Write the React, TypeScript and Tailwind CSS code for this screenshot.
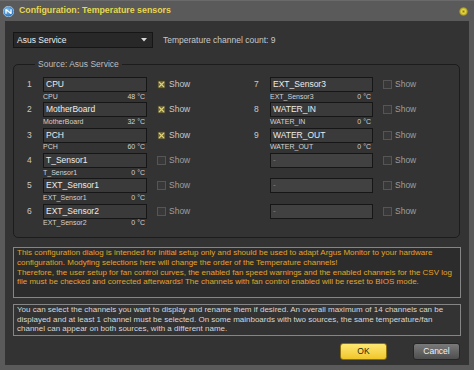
import React from 'react';

type Sensor = { n: number; name: string; temp: string; show: boolean };

const left: Sensor[] = [
  { n: 1, name: 'CPU', temp: '48 °C', show: true },
  { n: 2, name: 'MotherBoard', temp: '32 °C', show: true },
  { n: 3, name: 'PCH', temp: '60 °C', show: true },
  { n: 4, name: 'T_Sensor1', temp: '0 °C', show: false },
  { n: 5, name: 'EXT_Sensor1', temp: '0 °C', show: false },
  { n: 6, name: 'EXT_Sensor2', temp: '0 °C', show: false },
];

const right: (Sensor | null)[] = [
  { n: 7, name: 'EXT_Sensor3', temp: '0 °C', show: false },
  { n: 8, name: 'WATER_IN', temp: '0 °C', show: false },
  { n: 9, name: 'WATER_OUT', temp: '0 °C', show: false },
  null,
  null,
  null,
];

function Check({ on }: { on: boolean }) {
  return (
    <div className="flex items-center h-[15px]">
      {on ? (
        <div className="w-[9px] h-[9px] bg-[#67623c] border border-[#3a3820] flex items-center justify-center">
          <svg width="7" height="7" viewBox="0 0 7 7">
            <path d="M1 1 L6 6 M6 1 L1 6" stroke="#ddd27a" strokeWidth="1.2" />
          </svg>
        </div>
      ) : (
        <div className="w-[9px] h-[9px] bg-[#383838] border border-[#555555]" />
      )}
      <span className={`ml-[3px] text-[8.5px] ${on ? 'text-[#c8c8c8]' : 'text-[#9e9e9e]'}`}>Show</span>
    </div>
  );
}

function Row({ s, inputW }: { s: Sensor | null; inputW: string }) {
  return (
    <div className="flex h-[25.4px]">
      <div className="w-[16px] h-[15px] flex items-center text-[8.5px] text-[#c8c8c8]">{s ? s.n : ''}</div>
      <div className={inputW}>
        <div className={`h-[15px] border border-[#161616] flex items-center px-[2px] text-[8.5px] ${s ? 'bg-[#3a3a3a] text-[#ececec]' : 'bg-[#414141] text-[#777777]'}`}>
          {s ? s.name : '-'}
        </div>
        {s && (
          <div className="flex justify-between h-[10px] items-center text-[7px] text-[#d2d2d2] pr-[2px]">
            <span>{s.name}</span>
            <span>{s.temp}</span>
          </div>
        )}
      </div>
      <div className="ml-[10px]">
        <Check on={s ? s.show : false} />
      </div>
    </div>
  );
}

export default function App() {
  return (
    <div className="w-[474px] h-[370px] bg-[#5a5a5a] flex flex-col overflow-hidden" style={{ fontFamily: '"Liberation Sans", Arial, sans-serif' }}>
      <div className="h-[21px] flex items-center pl-[3px] pr-[6px] border-t border-[#6a6a6a]">
        <svg width="11" height="11" viewBox="0 0 11 11">
          <defs>
            <radialGradient id="ig" cx="0.4" cy="0.35" r="0.7">
              <stop offset="0" stopColor="#7ec0f0" />
              <stop offset="1" stopColor="#1f6bb8" />
            </radialGradient>
          </defs>
          <circle cx="5.5" cy="5.5" r="5.3" fill="url(#ig)" stroke="#d8e8f0" strokeWidth="0.6" />
          <path d="M3 7.8 V3.6 L8 7.4 V3.2" fill="none" stroke="#ffffff" strokeWidth="1.3" strokeLinejoin="round" />
        </svg>
        <span className="ml-[5px] text-[8.8px] font-bold text-[#e6d74e]">Configuration: Temperature sensors</span>
        <div className="flex-1" />
        <svg width="9" height="9" viewBox="0 0 9 9">
          <defs>
            <radialGradient id="yg" cx="0.5" cy="0.5" r="0.5">
              <stop offset="0" stopColor="#8a7a10" />
              <stop offset="0.45" stopColor="#e8d840" />
              <stop offset="1" stopColor="#9a8a20" />
            </radialGradient>
          </defs>
          <circle cx="4.5" cy="4.5" r="4.3" fill="url(#yg)" />
        </svg>
      </div>

      <div className="flex-1 mx-[5px] mb-[5px] bg-[#333333] pl-[8px] pr-[8px] pt-[11px] flex flex-col">
        <div className="flex items-center">
          <div className="w-[140px] h-[16px] bg-[#282828] border border-[#161616] flex items-center pl-[3px] pr-[5px] text-[8.5px] text-[#ececec]">
            <span className="flex-1">Asus Service</span>
            <svg width="6" height="4" viewBox="0 0 6 4">
              <path d="M0 0 H6 L3 3.5 Z" fill="#d8d8d8" />
            </svg>
          </div>
          <span className="ml-[10px] text-[8.5px] text-[#c8c8c8]">Temperature channel count: 9</span>
        </div>

        <fieldset className="mt-[10px] w-[447px] h-[180px] border border-[#1c1c1c] rounded-[5px] pl-[13px] pt-[6px]">
          <legend className="ml-[8px] px-[3px] text-[8.5px] text-[#bdbdbd]">Source: Asus Service</legend>
          <div className="grid grid-cols-[227px_1fr]">
            <div className="flex flex-col">
              {left.map(s => <Row key={s.n} s={s} inputW="w-[104px]" />)}
            </div>
            <div className="flex flex-col">
              {right.map((s, i) => <Row key={i} s={s} inputW="w-[103px]" />)}
            </div>
          </div>
        </fieldset>

        <div className="mt-[9px] w-[448px] h-[51px] border border-[#858585] bg-[#2c2c2c] px-[3px] text-[8px] leading-[9.8px] text-[#e4a328]">
          This configuration dialog is intended for initial setup only and should be used to adapt Argus Monitor to your hardware configuration. Modyfing selections here will change the order of the Temperature channels!<br />
          Therefore, the user setup for fan control curves, the enabled fan speed warnings and the enabled channels for the CSV log file must be checked and corrected afterwards! The channels with fan control enabled will be reset to BIOS mode.
        </div>

        <div className="mt-[6px] w-[448px] h-[32px] border border-[#858585] bg-[#333333] px-[3px] text-[8px] leading-[9.6px] text-[#d6d6d6]">
          You can select the channels you want to display and rename them if desired. An overall maximum of 14 channels can be displayed and at least 1 channel must be selected. On some mainboards with two sources, the same temperature/fan channel can appear on both sources, with a different name.
        </div>

        <div className="mt-[7px] flex justify-end gap-[26px] pr-[1px]">
          <button className="w-[47px] h-[17px] rounded-[3px] border border-[#8a7010] bg-gradient-to-b from-[#ffe870] to-[#f0c624] text-[8.5px] text-[#2a2400]">OK</button>
          <button className="w-[47px] h-[17px] rounded-[3px] border border-[#262626] bg-gradient-to-b from-[#7a7a7a] to-[#4e4e4e] text-[8.5px] text-[#f0f0f0]">Cancel</button>
        </div>
      </div>
    </div>
  );
}
